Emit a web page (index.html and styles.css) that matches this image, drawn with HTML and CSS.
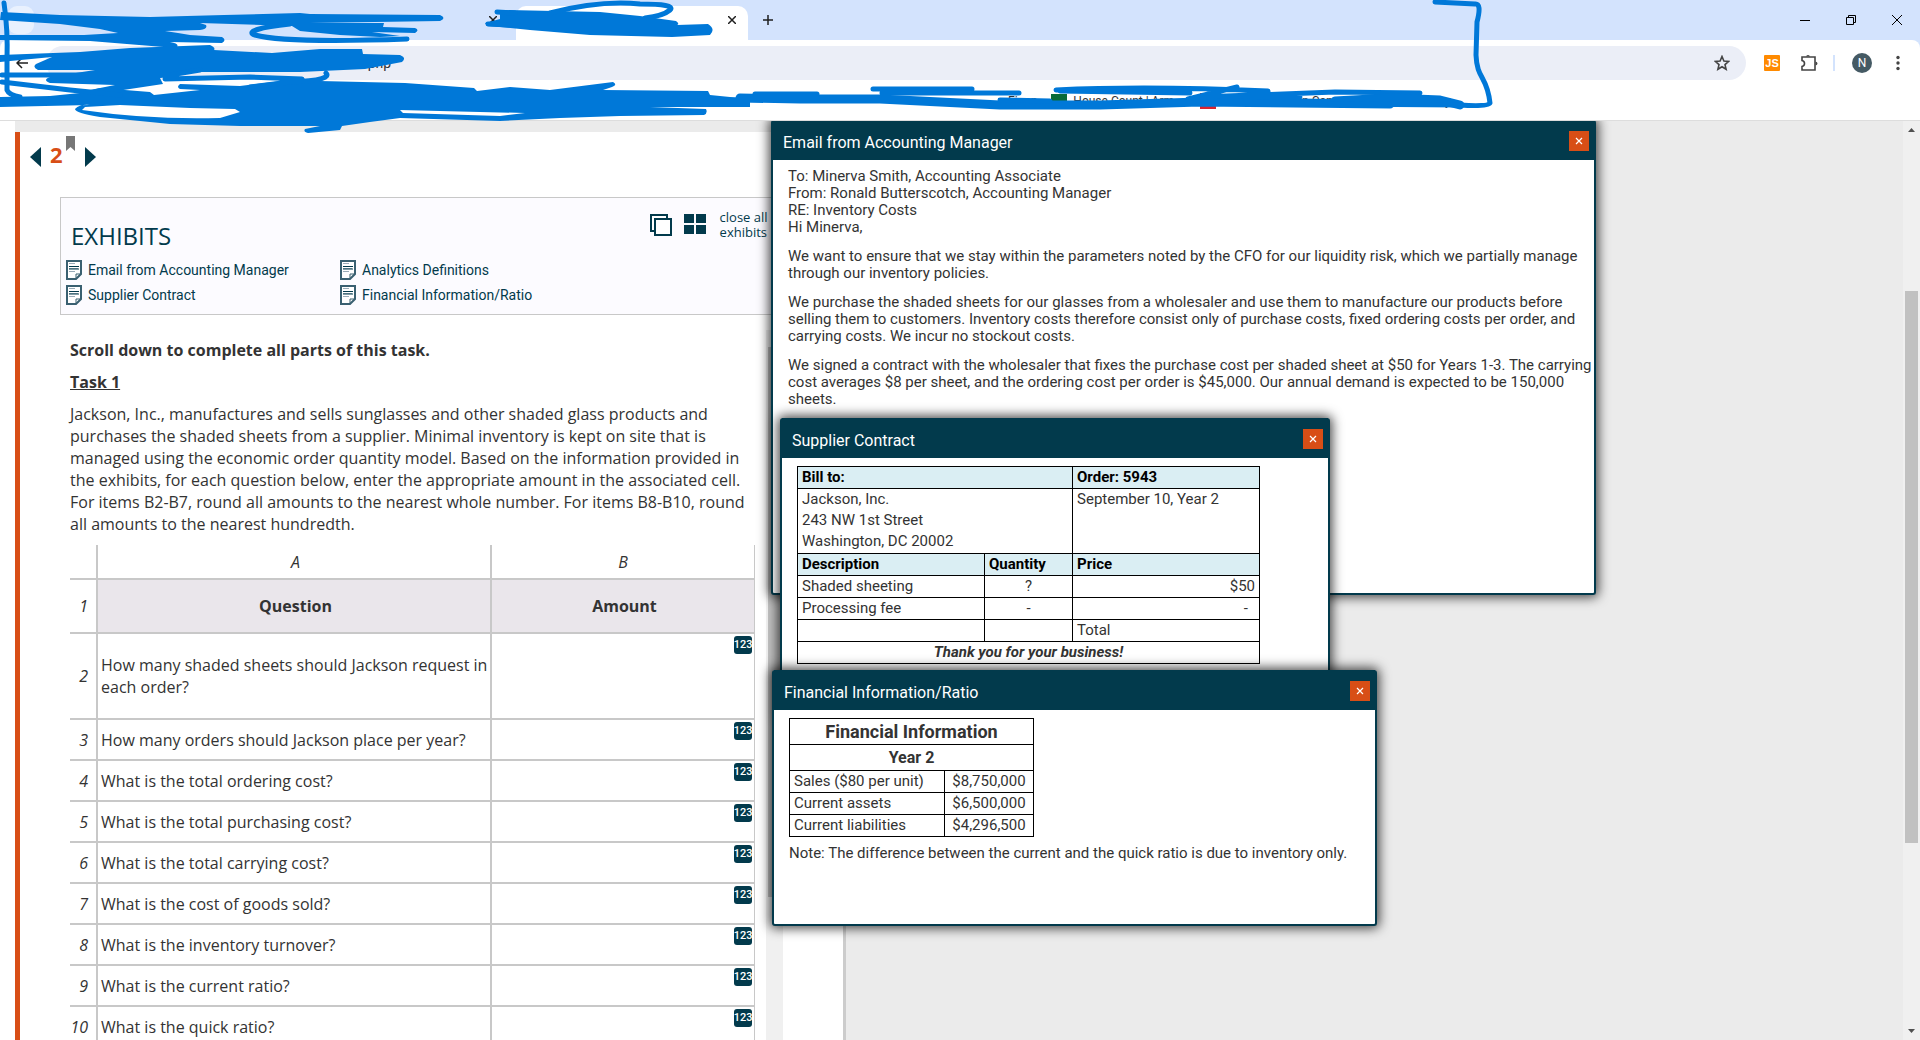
FILE: index.html
```
<!DOCTYPE html>
<html lang="en">
<head>
<meta charset="utf-8">
<title>Exhibits</title>
<link rel="stylesheet" href="styles.css">
</head>
<body>
<svg class="defs" aria-hidden="true">
  <symbol id="doc" viewBox="0 0 16 20">
    <path d="M1 1H15V14L10 19H1Z" fill="#fff" stroke="#3a6071" stroke-width="2"/>
    <path d="M10 19V14H15" fill="none" stroke="#3a6071"/>
    <path d="M3 3.500H9M3 8.500H12M3 11.500H9" stroke="#9aabb8"/>
    <path d="M3 6.500H13M3 9H13" stroke="#023a4c"/>
  </symbol>
</svg>
<header class="browser">
  <div class="tabs">
    <button class="tab-search" aria-label="Search tabs"></button>
    <div class="tab"><button class="tab-close" aria-label="Close tab"><svg width="8" height="8"><path d="M0 0L8 8M8 0L0 8"/></svg></button></div>
    <div class="tab"><button class="tab-close" aria-label="Close tab"><svg width="8" height="8"><path d="M0 0L8 8M8 0L0 8"/></svg></button></div>
    <div class="tab active"><button class="tab-close" aria-label="Close tab"><svg width="8" height="8"><path d="M0 0L8 8M8 0L0 8"/></svg></button></div>
    <button class="new-tab" aria-label="New tab"><svg width="10" height="10"><path d="M5 0V10M0 5H10"/></svg></button>
    <div class="win-buttons">
      <button aria-label="Minimize"><svg width="10" height="10"><path d="M0 5.500H10"/></svg></button>
      <button aria-label="Restore"><svg width="10" height="10"><path d="M.5 2.500H7.500V9.500H.5ZM2.500 2.500V.5H9.500V7.500H7.500"/></svg></button>
      <button aria-label="Close"><svg width="10" height="10"><path d="M0 0L10 10M10 0L0 10"/></svg></button>
    </div>
  </div>
  <div class="toolbar">
    <button class="back" aria-label="Back"><svg width="12" height="12"><path d="M12 6H1M6 1L1 6L6 11"/></svg></button>
    <div class="address"><span>.php</span>
      <button aria-label="Bookmark"><svg width="16" height="16" viewBox="0 0 16 16"><path d="M8 1.500L9.900 6L14.700 6.400L11 9.600L12.100 14.300L8 11.800L3.900 14.300L5 9.600L1.300 6.400L6.100 6Z"/></svg></button>
    </div>
    <div class="extensions">
      <button class="js">JS</button>
      <button class="puzzle" aria-label="Extensions"><svg width="18" height="18" viewBox="0 0 18 18"><path d="M2 3H15V16H2V12.500Q4.500 12 4.500 9.500Q4.500 7 2 6.500Z"/><path class="solid" d="M6 2.500Q6.300 1 8 1Q9.700 1 10 2.500ZM15.500 7.500Q17.500 7.800 17.500 9.500Q17.500 11.200 15.500 11.500Z"/></svg></button>
      <span class="sep"></span>
      <button class="avatar">N</button>
      <button aria-label="Menu"><svg width="4" height="16"><g class="solid"><circle cx="2" cy="2.500" r="1.700"/><circle cx="2" cy="8" r="1.700"/><circle cx="2" cy="13.500" r="1.700"/></g></svg></button>
    </div>
  </div>
  <nav class="bookmarks"><span>Finan</span><i class="green"></i><span>House Count | Arm</span><i class="red"></i><span class="late">n Cam</span><span class="last">Gray</span></nav>
</header>

<main class="viewport">
  <section class="task">
    <nav class="pager">
      <button aria-label="Previous"><svg width="11" height="20"><path d="M11 0V20L0 10Z"/></svg></button>
      <strong>2</strong>
      <svg class="flag" width="9" height="15"><path d="M0 0H9V15L4.500 11L0 15Z"/></svg>
      <button aria-label="Next"><svg width="11" height="20"><path d="M0 0V20L11 10Z"/></svg></button>
    </nav>
    <div class="exhibits">
      <div class="exhibits-head">
        <h1>EXHIBITS</h1>
        <button aria-label="Cascade"><svg width="22" height="22"><path class="line" d="M5 17H1V1H17V5M5 5H21V21H5Z"/></svg></button>
        <button aria-label="Tile"><svg width="22" height="20"><path d="M0 0H10V9H0ZM12 0H22V9H12ZM0 11H10V20H0ZM12 11H22V20H12Z"/></svg></button>
        <button class="close-all">close all<br>exhibits</button>
      </div>
      <ul>
        <li><a href="#email"><svg width="16" height="20"><use href="#doc"/></svg>Email from Accounting Manager</a></li>
        <li><a href="#analytics"><svg width="16" height="20"><use href="#doc"/></svg>Analytics Definitions</a></li>
        <li><a href="#supplier"><svg width="16" height="20"><use href="#doc"/></svg>Supplier Contract</a></li>
        <li><a href="#financial"><svg width="16" height="20"><use href="#doc"/></svg>Financial Information/Ratio</a></li>
      </ul>
    </div>
    <div class="work">
      <div class="questions">
        <p><b>Scroll down to complete all parts of this task.</b></p>
        <p><b><u>Task 1</u></b></p>
        <p>Jackson, Inc., manufactures and sells sunglasses and other shaded glass products and purchases the shaded sheets from a supplier. Minimal inventory is kept on site that is managed using the economic order quantity model. Based on the information provided in the exhibits, for each question below, enter the appropriate amount in the associated cell. For items B2-B7, round all amounts to the nearest whole number. For items B8-B10, round all amounts to the nearest hundredth.</p>
        <table class="sheet">
          <colgroup><col class="c-num"><col class="c-q"><col class="c-amt"></colgroup>
          <tr class="letters"><td></td><td>A</td><td>B</td></tr>
          <tr class="titles"><td>1</td><th>Question</th><th>Amount</th></tr>
          <tr class="tall"><td>2</td><td>How many shaded sheets should Jackson request in each order?</td><td><button>123</button></td></tr>
          <tr><td>3</td><td>How many orders should Jackson place per year?</td><td><button>123</button></td></tr>
          <tr><td>4</td><td>What is the total ordering cost?</td><td><button>123</button></td></tr>
          <tr><td>5</td><td>What is the total purchasing cost?</td><td><button>123</button></td></tr>
          <tr><td>6</td><td>What is the total carrying cost?</td><td><button>123</button></td></tr>
          <tr><td>7</td><td>What is the cost of goods sold?</td><td><button>123</button></td></tr>
          <tr><td>8</td><td>What is the inventory turnover?</td><td><button>123</button></td></tr>
          <tr><td>9</td><td>What is the current ratio?</td><td><button>123</button></td></tr>
          <tr><td>10</td><td>What is the quick ratio?</td><td><button>123</button></td></tr>
        </table>
      </div>
      <div class="scroll inner"><svg width="7" height="4"><path d="M0 4L3.500 0L7 4Z"/></svg><span class="thumb"></span></div>
    </div>
  </section>
  <div class="desk"></div>
  <div class="scroll outer"><svg width="7" height="4"><path d="M0 4L3.500 0L7 4Z"/></svg><span class="thumb"></span><svg width="7" height="4"><path d="M0 0L3.500 4L7 0Z"/></svg></div>

  <article class="window email" id="email">
    <header><h2>Email from Accounting Manager</h2><button aria-label="Close"><svg width="8" height="8"><path d="M1 1L7 7M7 1L1 7"/></svg></button></header>
    <div class="body">
      <p>To: Minerva Smith, Accounting Associate<br>From: Ronald Butterscotch, Accounting Manager<br>RE: Inventory Costs<br>Hi Minerva,</p>
      <p>We want to ensure that we stay within the parameters noted by the CFO for our liquidity risk, which we partially manage through our inventory policies.</p>
      <p>We purchase the shaded sheets for our glasses from a wholesaler and use them to manufacture our products before selling them to customers. Inventory costs therefore consist only of purchase costs, fixed ordering costs per order, and carrying costs. We incur no stockout costs.</p>
      <p>We signed a contract with the wholesaler that fixes the purchase cost per shaded sheet at $50 for Years 1-3. The carrying cost averages $8 per sheet, and the ordering cost per order is $45,000. Our annual demand is expected to be 150,000 sheets.</p>
    </div>
  </article>

  <article class="window supplier" id="supplier">
    <header><h2>Supplier Contract</h2><button aria-label="Close"><svg width="8" height="8"><path d="M1 1L7 7M7 1L1 7"/></svg></button></header>
    <div class="body">
      <table class="grid">
        <colgroup><col class="s-desc"><col class="s-qty"><col class="s-price"></colgroup>
        <tr><th colspan="2">Bill to:</th><th>Order: 5943</th></tr>
        <tr class="top"><td colspan="2">Jackson, Inc.<br>243 NW 1st Street<br>Washington, DC 20002</td><td>September 10, Year 2</td></tr>
        <tr><th>Description</th><th>Quantity</th><th>Price</th></tr>
        <tr><td>Shaded sheeting</td><td class="mid">?</td><td class="right">$50</td></tr>
        <tr><td>Processing fee</td><td class="mid">-</td><td class="right dash">-</td></tr>
        <tr><td></td><td></td><td>Total</td></tr>
        <tr><td colspan="3" class="mid thanks">Thank you for your business!</td></tr>
      </table>
    </div>
  </article>

  <article class="window financial" id="financial">
    <header><h2>Financial Information/Ratio</h2><button aria-label="Close"><svg width="8" height="8"><path d="M1 1L7 7M7 1L1 7"/></svg></button></header>
    <div class="body">
      <table class="grid">
        <colgroup><col class="f-name"><col class="f-sum"></colgroup>
        <tr class="big"><td colspan="2">Financial Information</td></tr>
        <tr class="year"><td colspan="2">Year 2</td></tr>
        <tr><td>Sales ($80 per unit)</td><td class="mid">$8,750,000</td></tr>
        <tr><td>Current assets</td><td class="mid">$6,500,000</td></tr>
        <tr><td>Current liabilities</td><td class="mid">$4,296,500</td></tr>
      </table>
      <p>Note: The difference between the current and the quick ratio is due to inventory only.</p>
    </div>
  </article>
</main>

<svg class="ink" width="1500" height="140" aria-hidden="true">
  <path class="fill" d="M1 12L60 15 150 17 224 15 300 13 310 14 440 15Q447 18 440 21L310 23 384 23 383 27 415 28Q420 30 415 33L372 32 400 36 380 37 340 35 300 31 292 26 200 23 206 25Q208 29 200 30L165 31 178 33 190 35 222 37Q227 40 222 43L170 42Q181 44 176 48L90 41 0 40 0 35 84 35 118 33 100 29 60 24 0 20Z"/>
  <path class="fill" d="M502 10L600 12 640 16 676 21Q680 24 677 25L708 24Q716 29 710 35L672 37 590 35 530 30 500 27 487 26 485 23 500 19 500 10Z"/>
  <path class="fill" d="M0 55L80 52 130 48 210 45Q216 48 214 50L272 53 320 49 362 49 363 54 400 55Q407 58 402 62L365 69 300 72 195 72 160 78 163 84 110 92 80 92 115 85 50 83Q42 80 50 77L95 70 38 70Q32 67 36 64L52 57 0 62Z"/>
  <path class="fill" fill-rule="evenodd" d="M0 97L50 96 80 93 100 88 150 92 154 95 200 90 180 89Q176 87 180 84L240 86 290 80 320 81 405 83 474 88 477 91 510 87 550 90 613 82Q618 85 612 87L603 90 708 91 710 95 730 97 750 98 750 107 650 107 706 109Q708 113 704 115L620 116 560 118 500 121 400 118 370 122 342 126 340 130 308 133Q303 132 305 129L320 126 240 126 170 124 100 117Q75 113 75 109Q80 104 90 105L0 107ZM82 110Q150 120 220 118L240 112 235 109 190 108 120 105 85 107ZM403 113L500 116 525 113 400 110Z"/>
  <g>
    <path d="M4 3Q8 30 7 60L7 90Q9 95 20 97"/>
    <path d="M290 24C260 27 245 32 255 35C280 42 350 41 407 39"/>
    <path d="M497 12L515 13M488 24L510 25"/>
    <path d="M550 13Q600 0 640 4Q676 4 670 10Q663 16 645 18"/>
    <path d="M2 75L60 75 170 75 200 70M2 82L70 90 120 95M165 79L250 77 302 79M326 73C330 77 322 81 290 82L250 87"/>
    <path class="wide" d="M740 98L800 99 880 99 1000 105 1100 105 1200 102 1390 104"/>
    <path d="M755 94L817 94M873 89L972 89M882 93L1019 93M1000 100L1050 101"/>
    <path d="M1056 90C1120 87 1200 88 1268 91M1060 91L1190 93M1188 99L1237 87M1200 97L1335 92 1420 93M1220 96L1300 97"/>
    <path class="wide" d="M1335 101L1390 98 1440 100 1460 105"/>
    <path d="M1435 2L1475 4Q1482 3 1477 22L1476 55C1477 80 1487 75 1490 103Q1488 107 1460 105L1330 104"/>
  </g>
</svg>
</body>
</html>
```
FILE: styles.css
```
* { box-sizing: border-box; }
body {
  margin: 0;
  height: 100vh;
  overflow: hidden;
  display: flex;
  flex-direction: column;
  position: relative;
  background: #fff;
  color: #333;
  font: 16px/22px "Open Sans", sans-serif;
}
button { border: 0; padding: 0; background: none; font: inherit; color: inherit; display: flex; align-items: center; justify-content: center; }
h1, h2, p, ul { margin: 0; padding: 0; }
svg { display: block; }
.defs { position: absolute; width: 0; height: 0; }

/* browser frame */
.browser { flex: none; height: 121px; border-bottom: 1px solid #ddd; background: #d3e3fd; font: 12px/16px Roboto, sans-serif; }
.browser svg { fill: none; stroke: #1f1f1f; stroke-width: 1.5; }
.browser .solid { fill: #444; stroke: none; }
.tabs { height: 40px; padding: 6px 0 0 8px; display: flex; }
.tab-search { width: 26px; height: 28px; border-radius: 9px; background: #e9f1fe; }
.tab { width: 236px; height: 34px; padding: 0 9px; display: flex; align-items: flex-start; justify-content: flex-end; }
.tab .tab-close { height: 28px; }
.tab.active { width: 232px; margin-left: 10px; background: #fff; border-radius: 10px 10px 0 0; padding-right: 12px; }
.new-tab { width: 40px; height: 28px; }
.win-buttons { margin-left: auto; display: flex; }
.win-buttons button { width: 46px; height: 28px; }
.win-buttons svg { stroke: #000; stroke-width: 1; }
.toolbar { height: 46px; padding: 6px 20px 6px 16px; border-radius: 8px 8px 0 0; background: #fff; display: flex; align-items: center; gap: 18px; }
.address { flex: 1; height: 34px; padding: 0 16px 0 318px; border-radius: 17px; background: #ebeef7; display: flex; align-items: center; justify-content: space-between; font-size: 14px; }
.address svg, .extensions svg { stroke: #444; stroke-width: 1.600; }
.extensions { display: flex; align-items: center; gap: 17px; }
.js { width: 16px; height: 16px; border-radius: 1px; background: #ff8a00; color: #fff; font: bold 11px/16px "Liberation Sans", sans-serif; }
.extensions .js { margin-right: 3px; }
.extensions .puzzle { margin-right: -2px; }
.sep { width: 2px; height: 16px; background: #d3e3fd; }
.avatar { width: 20px; height: 20px; border-radius: 50%; background: #455a64; color: #fff; }
.extensions .avatar { margin-right: 7px; }
.bookmarks { height: 34px; padding: 0 40px 4px 1008px; background: #fff; display: flex; align-items: center; gap: 6px; color: #333; }
.bookmarks i { width: 16px; height: 14px; background: #0a6b38; margin-left: 8px; }
.bookmarks .red { background: #d8232f; margin-left: 20px; height: 16px; }
.bookmarks .late { margin-left: 80px; }
.bookmarks .last { margin-left: 84px; }

/* page */
.viewport { flex: 1; min-height: 0; position: relative; overflow: hidden; display: flex; padding-left: 15px; }
.task { flex: 0 0 43.6%; margin-top: 11px; border-left: 5px solid #d84e16; border-right: 3px solid #ccc; background: #fff; padding: 4px 60px 0 40px; display: flex; flex-direction: column; position: relative; }
.task::before { content: ""; position: absolute; left: -5px; right: -3px; top: -11px; height: 11px; background: #ebebeb; }
.desk { flex: 1; background: #ebebeb; }
.pager { height: 61px; margin-left: -30px; display: flex; align-items: flex-start; gap: 9px; fill: #023a4c; }
.pager button { margin-top: 11px; }
.pager strong { color: #d84e16; font-size: 22px; line-height: 30px; width: 12px; margin-top: 3px; }
.pager .flag { fill: #777; margin-left: -5px; }
.pager .flag + button { margin-left: 1px; }
.exhibits { height: 118px; border: 1px solid #c8c8c8; background: #fcfbff; padding: 14px 6px 0 5px; color: #023a4c; }
.exhibits-head { display: flex; align-items: flex-start; height: 48px; fill: #023a4c; }
.exhibits-head h1 { font-size: 24px; line-height: 32px; font-weight: 400; flex: 1; padding: 8px 0 0 5px; }
.exhibits-head button { margin-top: 2px; margin-right: 12px; }
.exhibits-head .line { fill: #fff; stroke: #023a4c; stroke-width: 2; }
.exhibits-head .close-all { font-size: 13px; line-height: 15px; margin: -2px 8px 0 2px; text-align: left; }
.exhibits ul { display: grid; grid-template-columns: 274px 1fr; list-style: none; }
.exhibits li { height: 25px; }
.exhibits a { display: flex; gap: 6px; color: inherit; text-decoration: none; font: 14px/20px Roboto, sans-serif; }
.work { flex: 1; min-height: 0; margin-top: 15px; display: flex; overflow: hidden; }
.questions { flex: 1; padding: 9px 10px 0 10px; display: flex; flex-direction: column; gap: 10px; }
.sheet { width: 685px; max-width: 100%; border-collapse: collapse; table-layout: fixed; }
.c-num { width: 27px; }
.c-q { width: 394px; }
.sheet td, .sheet th { border: 2px solid #c8c8c8; height: 41px; padding: 0 0 0 3px; }
.sheet td:first-child { border-left: 0; font-style: italic; text-align: right; padding: 0 8px 0 0; }
.sheet tr > :last-child { border-right-width: 1px; }
.sheet tr > td:last-child { vertical-align: top; padding: 2px 2px 0; }
.sheet .letters td { border-top: 0; height: 34px; text-align: center; font-style: italic; }
.sheet .letters td:last-child { vertical-align: middle; padding: 0; }
.sheet .titles > * { height: 54px; }
.sheet th { background: #eae6eb; }
.sheet .tall td { height: 86px; }
.sheet button { width: 18px; height: 18px; margin-left: auto; border-radius: 3px; background: #023a4c; color: #fff; font: 500 11px/18px Roboto, sans-serif; }

.scroll { flex: 0 0 17px; background: #f0f0f0; display: flex; flex-direction: column; align-items: center; padding: 7px 0; fill: #505050; }
.thumb { width: 13px; background: #c1c1c1; }
.inner .thumb { height: 550px; margin-top: 6px; }
.outer .thumb { height: 61%; margin: 159px 0 auto; }

/* exhibit windows */
.window { position: absolute; border: 2px solid #023a4c; border-top: 0; border-radius: 3px; background: #fff; box-shadow: 0 0 12px 2px rgba(0,0,0,.75); font: 15px/17px Roboto, sans-serif; }
.window > header { height: 40px; background: #023a4c; color: #fff; display: flex; align-items: flex-start; justify-content: space-between; padding: 11px 5px 0 10px; }
.window h2 { font-size: 16px; line-height: 24px; font-weight: 400; }
.window > header button { width: 20px; height: 20px; background: #d84e16; }
.window > header svg { fill: none; stroke: #fff; stroke-width: 1.200; }
.body { padding: 8px 0 8px 15px; }
.email { left: 771px; top: -1px; width: 825px; height: 475px; }
.supplier { left: 780px; top: 297px; width: 550px; height: 300px; }
.financial { left: 772px; top: 549px; width: 605px; height: 256px; }
.email p + p { margin-top: 12px; }
.financial p { margin-top: 8px; }
.grid { border-collapse: collapse; table-layout: fixed; line-height: 21px; }
.grid td, .grid th { border: 1px solid #000; height: 22px; padding: 0 4px; text-align: left; }
.supplier .grid { width: 463px; }
.s-desc { width: 187px; }
.s-qty { width: 88px; }
.grid th { background: #daeef3; color: #000; font-weight: 700; }
.grid .top td { vertical-align: top; height: 65px; }
.grid .mid { text-align: center; }
.grid .right { text-align: right; }
.grid .dash { padding-right: 11px; }
.grid .thanks { font-weight: 700; font-style: italic; }
.financial .grid { width: 245px; }
.f-name { width: 155px; }
.grid .big td, .grid .year td { text-align: center; height: 26px; font-weight: 700; font-size: 16px; }
.grid .big td { font-size: 18px; }

/* pen strokes over the browser frame */
.ink { position: absolute; left: 0; top: 0; fill: none; stroke: #0078d8; stroke-width: 5; stroke-linecap: round; stroke-linejoin: round; pointer-events: none; }
.ink .fill { fill: #0078d8; stroke: none; }
.ink .wide { stroke-width: 9; }
```
